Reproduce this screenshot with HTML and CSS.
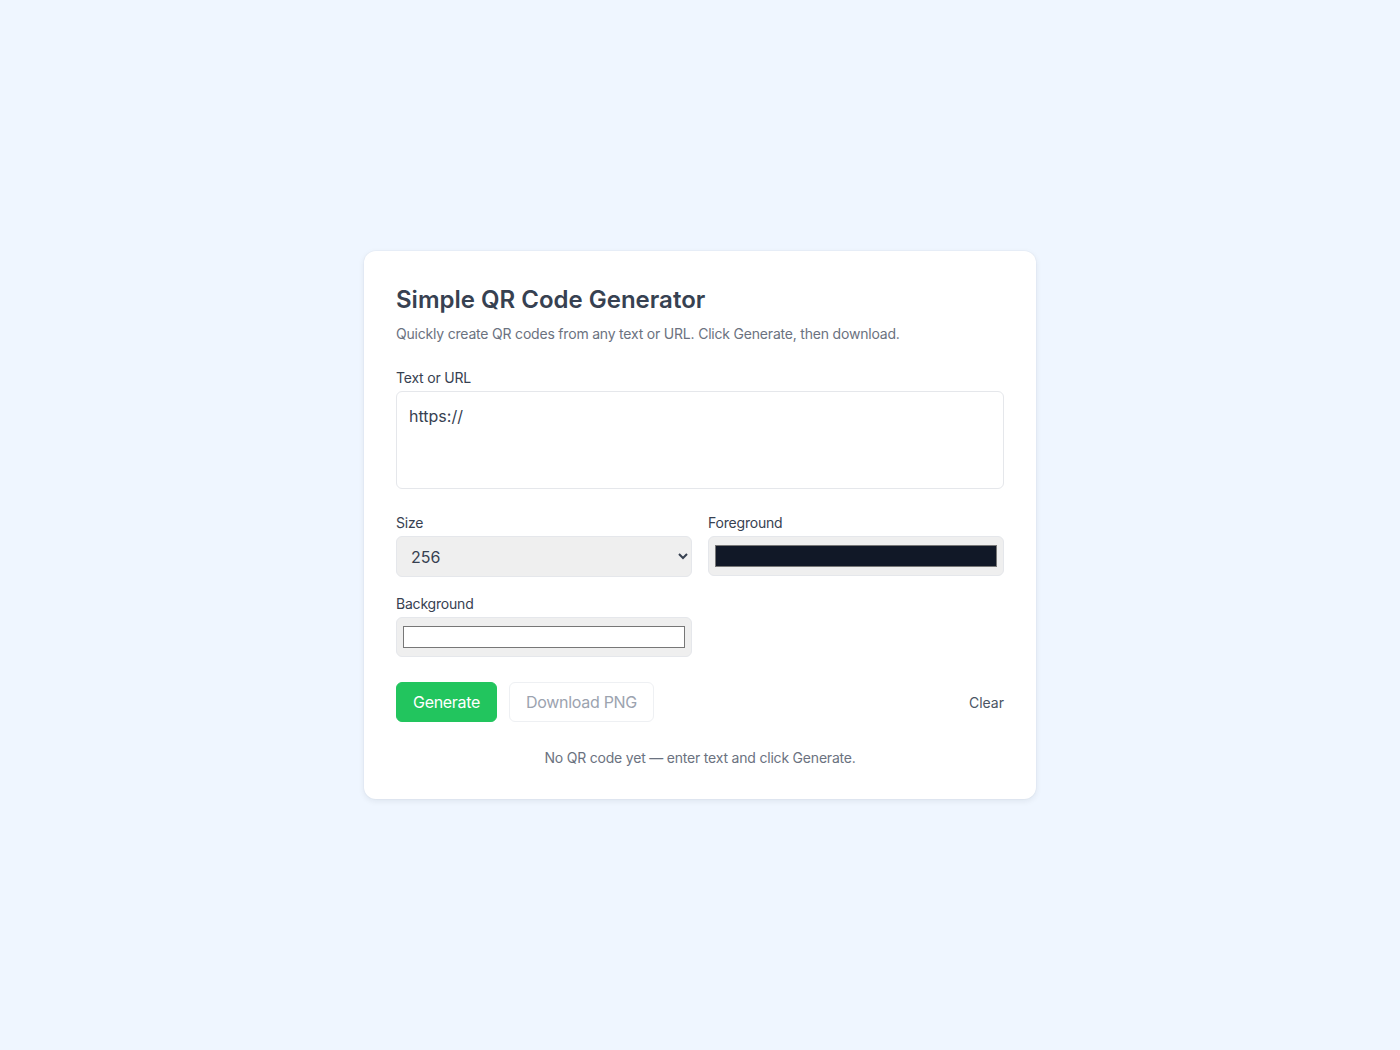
FILE: index.html
```html
<!DOCTYPE html>
<html lang="en">
<head>
<meta charset="utf-8">
<title>Simple QR Code Generator</title>
<link rel="stylesheet" href="styles.css">
</head>
<body>
<main class="page">
  <section class="card">
    <h1 class="title">Simple QR Code Generator</h1>
    <p class="subtitle">Quickly create QR codes from any text or URL. Click Generate, then download.</p>

    <div class="field">
      <label class="label" for="text">Text or URL</label>
      <textarea id="text" class="textarea">https://</textarea>
    </div>

    <div class="grid">
      <div class="field">
        <label class="label" for="size">Size</label>
        <select id="size" class="select">
          <option>128</option>
          <option selected>256</option>
          <option>512</option>
        </select>
      </div>
      <div class="field">
        <label class="label" for="fg">Foreground</label>
        <input id="fg" class="color" type="color" value="#111827">
      </div>
      <div class="field">
        <label class="label" for="bg">Background</label>
        <input id="bg" class="color" type="color" value="#ffffff">
      </div>
    </div>

    <div class="actions">
      <button class="btn btn-primary" type="button">Generate</button>
      <button class="btn btn-secondary" type="button" disabled>Download PNG</button>
      <button class="btn-link" type="button">Clear</button>
    </div>

    <p class="status">No QR code yet — enter text and click Generate.</p>
  </section>
</main>
</body>
</html>
```

FILE: styles.css
```css
* { box-sizing: border-box; }

html, body {
  margin: 0;
  padding: 0;
}

body {
  background: #eff6ff;
  font-family: Inter, "Noto Sans", Arial, sans-serif;
  color: #374151;
  letter-spacing: -0.2px;
}

.page {
  min-height: 1050px;
  display: flex;
  align-items: center;
  justify-content: center;
}

.card {
  width: 672px;
  background: #ffffff;
  border-radius: 12px;
  box-shadow: 0 2px 6px rgba(15, 23, 42, 0.08), 0 0 0 1px rgba(15, 23, 42, 0.02);
  padding: 33px 32px 31px;
}

.title {
  margin: 0;
  font-size: 24px;
  line-height: 32px;
  font-weight: 600;
  color: #374151;
  letter-spacing: 0;
}

.subtitle {
  margin: 8px 0 0;
  font-size: 14px;
  line-height: 20px;
  color: #6b7280;
}

.field {
  display: flex;
  flex-direction: column;
  gap: 5px;
}

.card > .field {
  margin-top: 26px;
}

.label {
  font-size: 14px;
  line-height: 16px;
  color: #374151;
}

.textarea {
  width: 100%;
  height: 98px;
  resize: none;
  border: 1px solid #e5e7eb;
  border-radius: 6px;
  padding: 12px;
  font: inherit;
  font-size: 16px;
  line-height: 24px;
  color: #374151;
  background: #ffffff;
}

.grid {
  margin-top: 26px;
  display: grid;
  grid-template-columns: 1fr 1fr;
  column-gap: 16px;
  row-gap: 19px;
}

.select {
  width: 100%;
  height: 41px;
  padding: 0 8px 0 10px;
  border: 1px solid #e5e7eb;
  border-radius: 6px;
  background-color: #efefef;
  font: inherit;
  font-size: 16px;
  color: #374151;
}

.color {
  width: 100%;
  height: 40px;
  padding: 4px;
  border: 1px solid #e5e7eb;
  border-radius: 6px;
  background: #efefef;
}

.actions {
  margin-top: 25px;
  display: flex;
  align-items: center;
  gap: 12px;
}

.btn {
  height: 40px;
  padding: 0 16px;
  border-radius: 6px;
  font: inherit;
  font-size: 16px;
  letter-spacing: -0.3px;
}

.btn-primary {
  background: #22c55e;
  border: 1px solid #22c55e;
  color: #ffffff;
}

.btn-secondary {
  background: #ffffff;
  border: 1px solid #eef0f3;
  color: #9ca3af;
}

.btn-link {
  margin-left: auto;
  background: none;
  border: none;
  padding: 0;
  font: inherit;
  font-size: 14px;
  color: #4b5563;
}

.status {
  margin: 26px 0 0;
  text-align: center;
  font-size: 14px;
  line-height: 20px;
  color: #6b7280;
}
```
